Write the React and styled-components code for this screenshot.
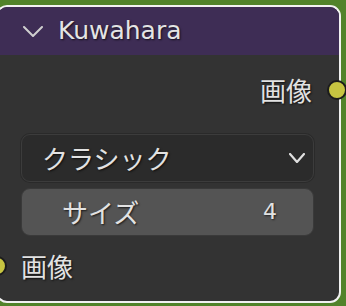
import React from 'react';
import styled, { createGlobalStyle } from 'styled-components';

const GlobalStyle = createGlobalStyle`
  html, body {
    margin: 0;
    padding: 0;
    background: #51832a;
    overflow: hidden;
  }
  body {
    font-family: "DejaVu Sans", "Noto Sans CJK JP", sans-serif;
  }
`;

const Canvas = styled.div`
  width: 346px;
  height: 306px;
  padding-top: 5px;
  box-sizing: border-box;
  overflow: hidden;
`;

const Node = styled.div`
  box-sizing: border-box;
  width: 345px;
  margin-left: -4px;
  border: 2px solid #f2f2f2;
  border-radius: 11px;
  background: #333333;
  position: relative;
`;

const Header = styled.div`
  height: 48px;
  display: flex;
  align-items: center;
  gap: 15px;
  padding-left: 25px;
  background: #3e2d55;
  border-radius: 9px 9px 0 0;
  box-sizing: border-box;
`;

const Title = styled.span`
  font-family: "DejaVu Sans", sans-serif;
  font-size: 25px;
  color: #e4e4e4;
  text-shadow: 1px 1px 2px rgba(0, 0, 0, 0.7);
  line-height: 1;
  margin-top: -1px;
`;

const Body = styled.div`
  display: flex;
  flex-direction: column;
  padding: 17px 25px 17px 23px;
`;

const SocketRow = styled.div`
  position: relative;
  height: 36px;
  display: flex;
  align-items: center;
  justify-content: ${p => (p.$out ? 'flex-end' : 'flex-start')};
  margin: ${p => (p.$out ? '0 -23px 26px 0' : '12px 0 0 0')};
  padding-right: ${p => (p.$out ? '25px' : '0')};
`;

const Label = styled.span`
  font-family: "Noto Sans CJK JP", sans-serif;
  font-size: 26px;
  color: #e2e2e2;
  line-height: 1;
  text-shadow: 1px 1px 2px rgba(0, 0, 0, 0.7);
`;

const Socket = styled.span`
  position: absolute;
  top: 50%;
  ${p => (p.$out ? 'right: -10px;' : 'left: -34px;')}
  width: 16px;
  height: 16px;
  margin-top: -10px;
  border-radius: 50%;
  background: #c7c541;
  border: 2px solid #1c1c1c;
`;

const Select = styled.div`
  height: 48px;
  box-sizing: border-box;
  display: flex;
  align-items: center;
  justify-content: space-between;
  padding: 0 8px 0 20px;
  background: #2b2b2b;
  border: 1px solid #3c3c3c;
  border-radius: 9px;
  box-shadow: 0 0 0 1px #2a2a2a;
`;

const Slider = styled.div`
  height: 48px;
  box-sizing: border-box;
  margin-top: 6px;
  display: flex;
  align-items: center;
  justify-content: space-between;
  padding: 0 36px 0 40px;
  background: #545454;
  border: 1px solid #3a3a3a;
  border-radius: 9px;
`;

const Value = styled.span`
  font-family: "DejaVu Sans", sans-serif;
  font-size: 22px;
  color: #e2e2e2;
  line-height: 1;
  text-shadow: 1px 1px 2px rgba(0, 0, 0, 0.6);
`;

const Chevron = ({ w, h, color, stroke }) => (
  <svg width={w} height={h} viewBox={`0 0 ${w} ${h}`} style={{ display: 'block' }}>
    <polyline
      points={`1,1 ${w / 2},${h - 1} ${w - 1},1`}
      fill="none"
      stroke={color}
      strokeWidth={stroke}
      strokeLinecap="round"
      strokeLinejoin="round"
    />
  </svg>
);

export default function App() {
  return (
    <>
      <GlobalStyle />
      <Canvas>
        <Node>
          <Header>
            <Chevron w={20} h={11} color="#cfcfcf" stroke={2} />
            <Title>Kuwahara</Title>
          </Header>
          <Body>
            <SocketRow $out>
              <Label>画像</Label>
              <Socket $out />
            </SocketRow>
            <Select>
              <Label>クラシック</Label>
              <Chevron w={16} h={10} color="#e0e0e0" stroke={2.2} />
            </Select>
            <Slider>
              <Label>サイズ</Label>
              <Value>4</Value>
            </Slider>
            <SocketRow>
              <Label>画像</Label>
              <Socket />
            </SocketRow>
          </Body>
        </Node>
      </Canvas>
    </>
  );
}
